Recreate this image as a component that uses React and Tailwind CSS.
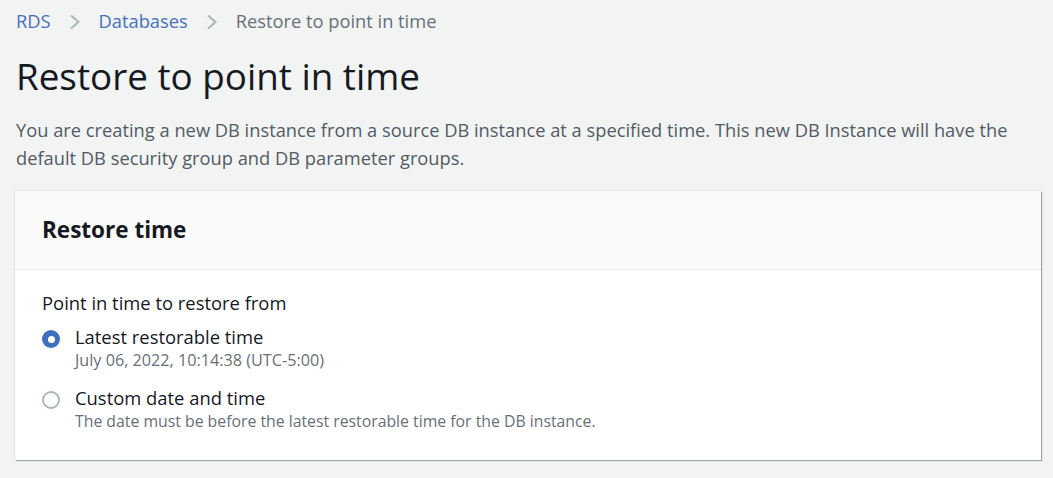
import React from "react";

function Chevron() {
  return (
    <svg width="12" height="16" viewBox="0 0 12 16" className="mx-[18px] mt-[1px]" aria-hidden="true">
      <path d="M2 1.5 L9.5 8 L2 14.5" fill="none" stroke="#aab7b8" strokeWidth="2" />
    </svg>
  );
}

function Radio({ checked }) {
  return checked ? (
    <span className="mt-[5px] flex h-[18px] w-[18px] shrink-0 items-center justify-center rounded-full bg-[#3f70c0]">
      <span className="h-[7px] w-[7px] rounded-full bg-white" />
    </span>
  ) : (
    <span className="mt-[5px] h-[18px] w-[18px] shrink-0 rounded-full border-2 border-[#aab7b8] bg-white" />
  );
}

export default function App() {
  return (
    <div
      className="min-h-[478px] w-full bg-[#f2f3f3] px-[15px] pt-[8px]"
      style={{ fontFamily: '"Open Sans", "Noto Sans", sans-serif' }}
    >
      <nav className="flex h-[26px] items-center pl-px text-[18.3px] leading-[26px]">
        <span className="text-[#4470c0]">RDS</span>
        <Chevron />
        <span className="text-[#4470c0]">Databases</span>
        <Chevron />
        <span className="text-[#687078]">Restore to point in time</span>
      </nav>
      <h1 className="mt-[20px] pl-px text-[36.8px] leading-[44px] text-[#16191f]">Restore to point in time</h1>
      <p className="mt-[18px] pl-px text-[18.3px] leading-[28px] text-[#545b64]">
        You are creating a new DB instance from a source DB instance at a specified time. This new DB Instance will have the default DB security group and DB parameter groups.
      </p>
      <section className="mt-[19px] w-[1026px] bg-white shadow-[1px_1px_1px_0_rgba(0,28,36,0.35),-1px_0_0_0_rgba(0,28,36,0.08),0_-1px_0_0_rgba(0,28,36,0.06)]">
        <div className="flex h-[79px] items-center border-b border-[#eaeded] bg-[#fafafa] px-[27px]">
          <h2 className="text-[22.5px] font-bold leading-[28px] text-[#16191f]">Restore time</h2>
        </div>
        <div className="px-[27px] pb-[28px] pt-[21px]">
          <div className="text-[18.4px] leading-[24px] text-[#16191f]">Point in time to restore from</div>
          <div className="mt-[10px] flex gap-[15px]">
            <Radio checked />
            <div>
              <div className="text-[18.4px] leading-[24px] text-[#16191f]">Latest restorable time</div>
              <div className="text-[16.2px] leading-[22px] text-[#687078]">July 06, 2022, 10:14:38 (UTC-5:00)</div>
            </div>
          </div>
          <div className="mt-[15px] flex gap-[15px]">
            <Radio />
            <div>
              <div className="text-[18.4px] leading-[24px] text-[#16191f]">Custom date and time</div>
              <div className="text-[15.8px] leading-[22px] text-[#687078]">The date must be before the latest restorable time for the DB instance.</div>
            </div>
          </div>
        </div>
      </section>
    </div>
  );
}
